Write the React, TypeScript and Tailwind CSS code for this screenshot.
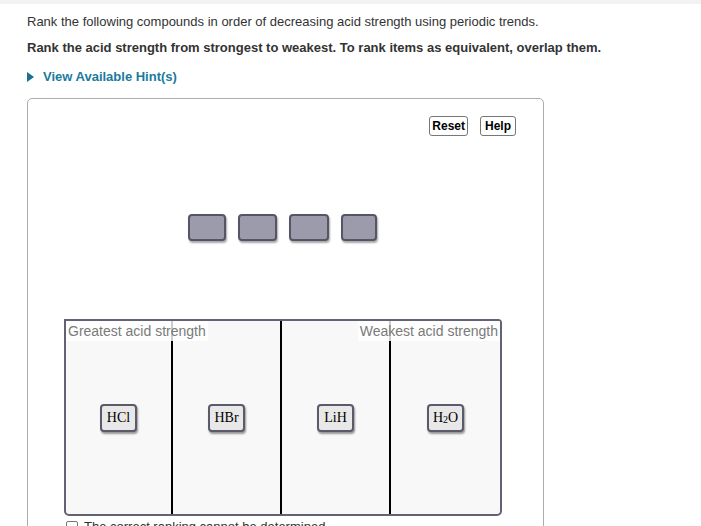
import React from "react";

const Tile = ({ w }: { w: string }) => (
  <div className={`${w} h-[27px] rounded-[4px] border-2 border-[#565566] bg-[#9c9bab] shadow-[1px_2px_2px_rgba(0,0,0,0.35)]`} />
);

const Item = ({ children }: { children: React.ReactNode }) => (
  <div className="min-w-[37px] h-[28px] px-[4px] flex items-center justify-center rounded-[4px] border-2 border-[#5a5a6a] bg-[#e8e8e8] shadow-[1px_2px_2px_rgba(0,0,0,0.4)] text-[14px] text-black" style={{ fontFamily: '"Liberation Serif", "DejaVu Serif", serif' }}>
    {children}
  </div>
);

export default function App() {
  return (
    <div className="w-[701px] h-[526px] overflow-hidden bg-white text-[#333]" style={{ fontFamily: '"Liberation Sans", Arial, sans-serif' }}>
      <div className="h-[4px] bg-[#f2f2f2]" />
      <div className="pl-[27px] pt-[10px]">
        <p className="text-[13px] leading-[16px] text-[#333]">Rank the following compounds in order of decreasing acid strength using periodic trends.</p>
        <p className="mt-[10px] text-[13px] leading-[16px] font-bold text-[#333]">Rank the acid strength from strongest to weakest. To rank items as equivalent, overlap them.</p>
        <div className="mt-[13px] flex items-center gap-[9px] text-[13px] leading-[16px] font-bold text-[#1b7a9e]">
          <svg width="7" height="10" viewBox="0 0 7 10"><path d="M0 0 L7 5 L0 10 Z" fill="#1b6f8f" /></svg>
          <span>View Available Hint(s)</span>
        </div>
        <div className="mt-[13px] w-[517px] h-[500px] border border-[#acacac] rounded-[5px] pt-[17px]">
          <div className="flex justify-end gap-[12px] pr-[27px]">
            <button className="h-[20px] px-[2px] border border-[#777] rounded-[3px] bg-white text-[12px] font-bold text-black leading-none">Reset</button>
            <button className="h-[20px] px-[4px] border border-[#777] rounded-[3px] bg-white text-[12px] font-bold text-black leading-none">Help</button>
          </div>
          <div className="mt-[78px] flex gap-[12px] pl-[160px]">
            <Tile w="w-[38px]" />
            <Tile w="w-[39px]" />
            <Tile w="w-[40px]" />
            <Tile w="w-[36px]" />
          </div>
          <div className="relative mt-[78px] ml-[36px] w-[438px] h-[197px] border-2 border-[#626272] rounded-b-[5px] rounded-tr-[4px] bg-[#f8f8f8] flex">
            <div className="w-[107px] flex items-center justify-center border-r-2 border-black"><Item>HCl</Item></div>
            <div className="w-[109px] flex items-center justify-center border-r-2 border-black"><Item>HBr</Item></div>
            <div className="w-[109px] flex items-center justify-center border-r-2 border-black"><Item>LiH</Item></div>
            <div className="flex-1 flex items-center justify-center"><Item>H<sub className="text-[10px] relative top-[2px]">2</sub>O</Item></div>
            <div className="absolute left-0 top-0 bg-white/80 pl-[2px] pr-[2px] text-[14px] leading-[20px] text-[#7a7a7a]">Greatest acid strength</div>
            <div className="absolute right-0 top-0 bg-white/80 pl-[2px] pr-[2px] text-[14px] leading-[20px] text-[#7a7a7a]">Weakest acid strength</div>
          </div>
          <div className="mt-[3px] ml-[38px] flex items-start gap-[6px] text-[13px] leading-[16px] text-[#333]">
            <div className="mt-[2px] w-[12px] h-[12px] border border-[#777] rounded-[2px] bg-white" />
            <span>The correct ranking cannot be determined.</span>
          </div>
        </div>
      </div>
    </div>
  );
}
